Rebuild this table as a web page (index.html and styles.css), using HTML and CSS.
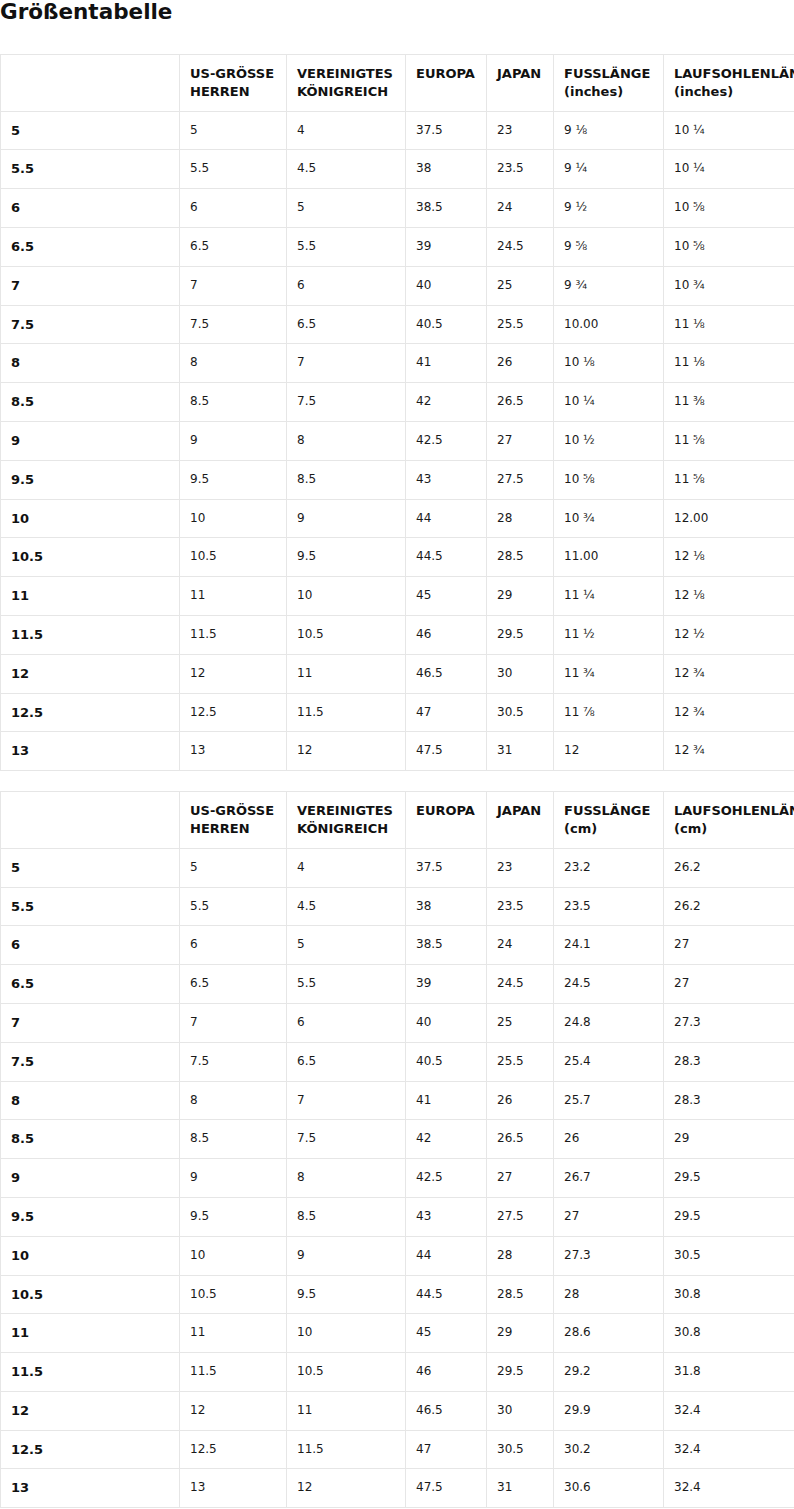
FILE: index.html
```html
<!DOCTYPE html>
<html lang="de">
<head>
<meta charset="utf-8">
<title>Größentabelle</title>
<link rel="stylesheet" href="styles.css">
</head>
<body>
<div class="page">
  <h1 class="title">Größentabelle</h1>
  <div class="table-wrap">
    <table class="size-table">
      <colgroup>
        <col class="c1"><col class="c2"><col class="c3"><col class="c4"><col class="c5"><col class="c6"><col class="c7">
      </colgroup>
      <thead>
        <tr><th></th><th>US-GRÖSSE HERREN</th><th>VEREINIGTES KÖNIGREICH</th><th>EUROPA</th><th>JAPAN</th><th>FUSSLÄNGE<br>(inches)</th><th>LAUFSOHLENLÄNGE<br>(inches)</th></tr>
      </thead>
      <tbody>
        <tr><td>5</td><td>5</td><td>4</td><td>37.5</td><td>23</td><td>9 ⅛</td><td>10 ¼</td></tr>
        <tr><td>5.5</td><td>5.5</td><td>4.5</td><td>38</td><td>23.5</td><td>9 ¼</td><td>10 ¼</td></tr>
        <tr><td>6</td><td>6</td><td>5</td><td>38.5</td><td>24</td><td>9 ½</td><td>10 ⅝</td></tr>
        <tr><td>6.5</td><td>6.5</td><td>5.5</td><td>39</td><td>24.5</td><td>9 ⅝</td><td>10 ⅝</td></tr>
        <tr><td>7</td><td>7</td><td>6</td><td>40</td><td>25</td><td>9 ¾</td><td>10 ¾</td></tr>
        <tr><td>7.5</td><td>7.5</td><td>6.5</td><td>40.5</td><td>25.5</td><td>10.00</td><td>11 ⅛</td></tr>
        <tr><td>8</td><td>8</td><td>7</td><td>41</td><td>26</td><td>10 ⅛</td><td>11 ⅛</td></tr>
        <tr><td>8.5</td><td>8.5</td><td>7.5</td><td>42</td><td>26.5</td><td>10 ¼</td><td>11 ⅜</td></tr>
        <tr><td>9</td><td>9</td><td>8</td><td>42.5</td><td>27</td><td>10 ½</td><td>11 ⅝</td></tr>
        <tr><td>9.5</td><td>9.5</td><td>8.5</td><td>43</td><td>27.5</td><td>10 ⅝</td><td>11 ⅝</td></tr>
        <tr><td>10</td><td>10</td><td>9</td><td>44</td><td>28</td><td>10 ¾</td><td>12.00</td></tr>
        <tr><td>10.5</td><td>10.5</td><td>9.5</td><td>44.5</td><td>28.5</td><td>11.00</td><td>12 ⅛</td></tr>
        <tr><td>11</td><td>11</td><td>10</td><td>45</td><td>29</td><td>11 ¼</td><td>12 ⅛</td></tr>
        <tr><td>11.5</td><td>11.5</td><td>10.5</td><td>46</td><td>29.5</td><td>11 ½</td><td>12 ½</td></tr>
        <tr><td>12</td><td>12</td><td>11</td><td>46.5</td><td>30</td><td>11 ¾</td><td>12 ¾</td></tr>
        <tr><td>12.5</td><td>12.5</td><td>11.5</td><td>47</td><td>30.5</td><td>11 ⅞</td><td>12 ¾</td></tr>
        <tr><td>13</td><td>13</td><td>12</td><td>47.5</td><td>31</td><td>12</td><td>12 ¾</td></tr>
      </tbody>
    </table>
  </div>
  <div class="table-wrap">
    <table class="size-table">
      <colgroup>
        <col class="c1"><col class="c2"><col class="c3"><col class="c4"><col class="c5"><col class="c6"><col class="c7">
      </colgroup>
      <thead>
        <tr><th></th><th>US-GRÖSSE HERREN</th><th>VEREINIGTES KÖNIGREICH</th><th>EUROPA</th><th>JAPAN</th><th>FUSSLÄNGE<br>(cm)</th><th>LAUFSOHLENLÄNGE<br>(cm)</th></tr>
      </thead>
      <tbody>
        <tr><td>5</td><td>5</td><td>4</td><td>37.5</td><td>23</td><td>23.2</td><td>26.2</td></tr>
        <tr><td>5.5</td><td>5.5</td><td>4.5</td><td>38</td><td>23.5</td><td>23.5</td><td>26.2</td></tr>
        <tr><td>6</td><td>6</td><td>5</td><td>38.5</td><td>24</td><td>24.1</td><td>27</td></tr>
        <tr><td>6.5</td><td>6.5</td><td>5.5</td><td>39</td><td>24.5</td><td>24.5</td><td>27</td></tr>
        <tr><td>7</td><td>7</td><td>6</td><td>40</td><td>25</td><td>24.8</td><td>27.3</td></tr>
        <tr><td>7.5</td><td>7.5</td><td>6.5</td><td>40.5</td><td>25.5</td><td>25.4</td><td>28.3</td></tr>
        <tr><td>8</td><td>8</td><td>7</td><td>41</td><td>26</td><td>25.7</td><td>28.3</td></tr>
        <tr><td>8.5</td><td>8.5</td><td>7.5</td><td>42</td><td>26.5</td><td>26</td><td>29</td></tr>
        <tr><td>9</td><td>9</td><td>8</td><td>42.5</td><td>27</td><td>26.7</td><td>29.5</td></tr>
        <tr><td>9.5</td><td>9.5</td><td>8.5</td><td>43</td><td>27.5</td><td>27</td><td>29.5</td></tr>
        <tr><td>10</td><td>10</td><td>9</td><td>44</td><td>28</td><td>27.3</td><td>30.5</td></tr>
        <tr><td>10.5</td><td>10.5</td><td>9.5</td><td>44.5</td><td>28.5</td><td>28</td><td>30.8</td></tr>
        <tr><td>11</td><td>11</td><td>10</td><td>45</td><td>29</td><td>28.6</td><td>30.8</td></tr>
        <tr><td>11.5</td><td>11.5</td><td>10.5</td><td>46</td><td>29.5</td><td>29.2</td><td>31.8</td></tr>
        <tr><td>12</td><td>12</td><td>11</td><td>46.5</td><td>30</td><td>29.9</td><td>32.4</td></tr>
        <tr><td>12.5</td><td>12.5</td><td>11.5</td><td>47</td><td>30.5</td><td>30.2</td><td>32.4</td></tr>
        <tr><td>13</td><td>13</td><td>12</td><td>47.5</td><td>31</td><td>30.6</td><td>32.4</td></tr>
      </tbody>
    </table>
  </div>
</div>
</body>
</html>
```

FILE: styles.css
```css
html, body {
  margin: 0;
  padding: 0;
  background: #ffffff;
}

body {
  font-family: "DejaVu Sans", "Liberation Sans", sans-serif;
  color: #111111;
  overflow: hidden;
}

.page {
  width: 794px;
  overflow: hidden;
}

.title {
  margin: 0 0 30px 0;
  font-size: 21.5px;
  line-height: 24px;
  font-weight: bold;
}

.table-wrap {
  overflow: hidden;
  margin-bottom: 20px;
}

.size-table {
  border-collapse: collapse;
  table-layout: fixed;
  width: 840px;
  font-size: 12px;
}

.c1 { width: 179px; }
.c2 { width: 107px; }
.c3 { width: 119px; }
.c4 { width: 81px; }
.c5 { width: 67px; }
.c6 { width: 110px; }
.c7 { width: 177px; }

.size-table th,
.size-table td {
  border: 1px solid #e6e6e6;
  padding: 10px 10px;
  line-height: 17.8px;
  text-align: left;
  white-space: nowrap;
}

.size-table th {
  vertical-align: top;
  font-size: 13px;
  font-weight: bold;
  white-space: normal;
}

.size-table td {
  vertical-align: middle;
  color: #1a1a1a;
}

.size-table td:first-child {
  font-size: 13px;
  font-weight: bold;
  color: #111111;
}
```
